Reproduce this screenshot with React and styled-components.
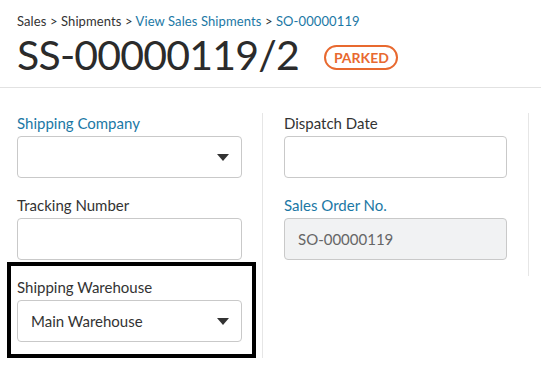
import * as React from 'react';
import styled, { createGlobalStyle } from 'styled-components';

const GlobalStyle = createGlobalStyle`
    body {
        margin: 0;
        background: #FFFFFF;
        font-family: Lato, "Liberation Sans", sans-serif;
        color: #333333;
    }
`;

const Page = styled.div`
    width: 541px;
    height: 382px;
    overflow: hidden;
    background: #FFFFFF;
`;

const Header = styled.div`
    padding: 13px 17px 0 17px;
    height: 88px;
    box-sizing: border-box;
    border-bottom: 1px solid #E2E2E2;
`;

const Breadcrumb = styled.div`
    font-size: 13px;
    line-height: 16px;
    letter-spacing: 0.1px;
    color: #333333;
`;

const Crumb = styled.span`
    color: ${p => p.link ? '#1B78A5' : '#333333'};
`;

const TitleRow = styled.div`
    display: flex;
    align-items: center;
    margin-top: 3px;
`;

const Heading = styled.h1`
    margin: 0;
    font-size: 41px;
    font-weight: 400;
    line-height: 46px;
    color: #2B2B2B;
    letter-spacing: -0.8px;
`;

const Badge = styled.span`
    margin-left: 25px;
    margin-top: 4px;
    height: 25px;
    padding: 0 7px 0 8px;
    box-sizing: border-box;
    border: 2px solid #E8692F;
    border-radius: 13px;
    color: #E8692F;
    font-size: 14px;
    font-weight: 700;
    display: flex;
    align-items: center;
`;

const Form = styled.div`
    display: flex;
    align-items: flex-start;
    padding-top: 25px;
`;

const Column = styled.div`
    width: ${p => p.w};
    padding: 0 ${p => p.pr} 16px ${p => p.pl};
    border-right: 1px solid #E6E6E6;
    display: flex;
    flex-direction: column;
    gap: 17px;
`;

const Field = styled.div`
    position: relative;
    display: flex;
    flex-direction: column;
    gap: 3px;

    ${p => p.highlight && `
        &::after {
            content: '';
            position: absolute;
            top: -15px;
            left: -10px;
            right: -14px;
            bottom: -16px;
            border: 4px solid #000000;
        }
    `}
`;

const Label = styled.label`
    font-size: 15px;
    line-height: 20px;
    color: ${p => p.link ? '#1B78A5' : '#333333'};
`;

const Box = styled.div`
    height: 42px;
    box-sizing: border-box;
    border: 1px solid #C9C9C9;
    border-radius: 4px;
    background: ${p => p.disabled ? '#F1F2F3' : '#FFFFFF'};
    display: flex;
    align-items: center;
    justify-content: space-between;
    padding: 0 12px 0 13px;
    font-size: 15px;
    color: ${p => p.disabled ? '#666666' : '#333333'};
`;

function Caret() {
    return (
        <svg width="12" height="7" viewBox="0 0 12 7">
            <path d="M0 0 L12 0 L6 7 Z" fill="#333333" />
        </svg>
    );
}

export default function App() {
    return (
        <Page>
            <GlobalStyle />
            <Header>
                <Breadcrumb>
                    <Crumb>Sales &gt; Shipments &gt; </Crumb>
                    <Crumb link>View Sales Shipments</Crumb>
                    <Crumb> &gt; </Crumb>
                    <Crumb link>SO-00000119</Crumb>
                </Breadcrumb>
                <TitleRow>
                    <Heading>SS-00000119/2</Heading>
                    <Badge>PARKED</Badge>
                </TitleRow>
            </Header>
            <Form>
                <Column w="225px" pl="17px" pr="20px">
                    <Field>
                        <Label link>Shipping Company</Label>
                        <Box><span /><Caret /></Box>
                    </Field>
                    <Field>
                        <Label>Tracking Number</Label>
                        <Box />
                    </Field>
                    <Field highlight>
                        <Label>Shipping Warehouse</Label>
                        <Box><span>Main Warehouse</span><Caret /></Box>
                    </Field>
                </Column>
                <Column w="223px" pl="21px" pr="21px">
                    <Field>
                        <Label>Dispatch Date</Label>
                        <Box />
                    </Field>
                    <Field>
                        <Label link>Sales Order No.</Label>
                        <Box disabled>SO-00000119</Box>
                    </Field>
                </Column>
            </Form>
        </Page>
    );
}
